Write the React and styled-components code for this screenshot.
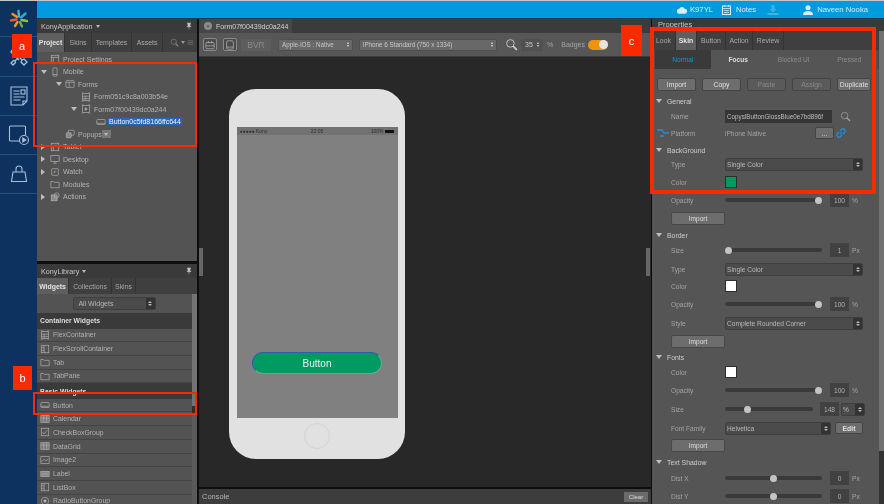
import React from "react";
import styled, { createGlobalStyle } from "styled-components";

const Global = createGlobalStyle`
  html, body { margin: 0; padding: 0; background: #222; }
  #root { width: 884px; height: 504px; overflow: hidden; }
  * { box-sizing: border-box; }
`;

const Page = styled.div`
  position: relative; width: 884px; height: 504px; overflow: hidden; display: flex;
  font-family: "Liberation Sans", Arial, sans-serif; font-size: 7px; color: #bdbdbd;
  background: #222; border-top: 1px solid #c4c7c9; filter: blur(0.3px);
`;
const Sidebar = styled.nav`
  width: 37px; flex: none; background: #0d325f; display: flex; flex-direction: column;
`;
const SideItem = styled.div`
  height: ${p => p.$h}px; flex: none; display: flex; align-items: center; justify-content: center;
  border-bottom: 1px solid #26517f; color: #a9c0d8;
`;
const Column = styled.div`flex: 1; min-width: 0; display: flex; flex-direction: column;`;
const TopBar = styled.header`
  height: 18px; flex: none; background: #009bdc; display: flex; align-items: center; justify-content: flex-end;
  color: #d4eefa; font-size: 7.7px; padding-right: 16px; border-bottom: 1px solid #063a55;
`;
const TopItem = styled.div`
  display: flex; align-items: center; gap: ${p => p.$gap ?? 3}px; margin-left: ${p => p.$ml}px; color: ${p => p.$c || "#d4eefa"};
`;
const Work = styled.div`flex: 1; min-height: 0; display: flex; background: #0e0e0e;`;

const LeftPane = styled.section`
  width: 160px; flex: none; display: flex; flex-direction: column; gap: 3px;
`;
const PanelBlock = styled.div`
  height: ${p => p.$h}px; flex: ${p => p.$h ? "none" : "1"}; min-height: 0; background: #535353; display: flex; flex-direction: column; overflow: hidden;
`;
const PanelHead = styled.div`
  height: 14px; flex: none; background: #3a3a3a; color: #c4c4c4; font-size: 7.2px; display: flex; align-items: center;
  justify-content: space-between; padding: 0 4px 0 4px;
`;
const Caret = styled.span`
  display: inline-block; width: 0; height: 0; margin-left: ${p => p.$ml ?? 3}px; vertical-align: middle;
  border-left: 2.5px solid transparent; border-right: 2.5px solid transparent; border-top: 3px solid ${p => p.$c || "#bbb"};
`;
const TabRow = styled.div`
  height: ${p => p.$h}px; flex: none; background: #3f3f3f; display: flex; align-items: stretch; position: relative;
`;
const Tab = styled.div`
  width: ${p => p.$w}px; flex: none; display: flex; align-items: center; justify-content: center; font-size: 6.9px;
  color: ${p => p.$active ? "#e2e2e2" : "#a9a9a9"}; background: ${p => p.$active ? "#5e5e5e" : "transparent"};
  border-right: 1px solid #333; font-weight: ${p => p.$active ? 700 : 400};
`;
const TabTools = styled.div`
  flex: 1; display: flex; align-items: center; justify-content: flex-end; gap: 2px; padding-right: 3px; color: #8c8c8c;
`;
const Tree = styled.div`padding-top: 1px; display: flex; flex-direction: column;`;
const TreeRow = styled.div`
  height: 12.5px; flex: none; display: flex; align-items: center; position: relative; padding-left: ${p => p.$x}px; color: #b4b4b4; gap: 3px;
`;
const TreeArrow = styled.span`
  width: 0; height: 0; flex: none; margin-right: ${p => p.$gap}px;
  ${p => p.$open
    ? "border-left:3px solid transparent;border-right:3px solid transparent;border-top:4px solid #bdbdbd;"
    : "border-top:3px solid transparent;border-bottom:3px solid transparent;border-left:4px solid #bdbdbd;"}
`;
const Selected = styled.span`background: #2d66b8; color: #eef; padding: 0 1px; margin-left: -1px;`;
const SmallDrop = styled.span`
  width: 9px; height: 8px; background: #777; display: inline-flex; align-items: center; justify-content: center; margin-left: -3px;
`;
const FilterRow = styled.div`
  height: 19px; flex: none; display: flex; justify-content: center; align-items: center; padding-right: 6px;
`;
const Select = styled.div`
  width: ${p => p.$w}px; height: ${p => p.$h || 13}px; flex: none; background: #4b4b4b; border: 1px solid #3e3e3e; border-radius: 2px;
  display: flex; align-items: center; justify-content: space-between; color: #b8b8b8; padding-left: 1px; overflow: hidden;
`;
const Stepper = styled.span`
  width: 9px; align-self: stretch; flex: none; background: #333; display: flex; flex-direction: column; align-items: center; justify-content: center; gap: 1px; color: #aaa;
  &::before, &::after { content: ""; width: 0; height: 0; border-left: 2px solid transparent; border-right: 2px solid transparent; }
  &::before { border-bottom: 2px solid #bbb; }
  &::after { border-top: 2px solid #bbb; }
`;
const Library = styled.div`flex: 1; min-height: 0; display: flex;`;
const WidgetList = styled.div`flex: 1; min-width: 0; display: flex; flex-direction: column; overflow: hidden;`;
const ListScroll = styled.div`
  width: 5px; flex: none; background: #5a5a5a; margin-top: -19px; display: flex; flex-direction: column;
  &::before { content: ""; flex: none; height: 112px; background: #737373; }
  &::after { content: ""; flex: none; height: 7px; background: #2e2e2e; }
`;
const WidgetHead = styled.div`
  height: 15.5px; flex: none; background: #3a3a3a; color: #dcdcdc; font-weight: 700; font-size: 6.8px; display: flex; align-items: center; padding-left: 3px;
`;
const WidgetRow = styled.div`
  height: 13.7px; flex: none; border-bottom: 1px solid #444; display: flex; align-items: center; gap: 3px; padding-left: 3px; color: #b2b2b2; font-size: 6.9px;
`;

const Center = styled.main`
  flex: 1; min-width: 0; margin: 0 1px 0 2px; display: flex; flex-direction: column; background: #282828;
`;
const FileTabs = styled.div`height: 14px; flex: none; background: #3b3b3b; display: flex;`;
const FileTab = styled.div`
  width: 93px; background: #474747; display: flex; align-items: center; gap: 4px; padding-left: 5px; color: #d2d2d2; font-size: 7px;
`;
const CloseDot = styled.span`
  width: 8px; height: 8px; border-radius: 50%; background: #8c8c8c; color: #444; font-size: 6px; line-height: 8px; text-align: center;
`;
const Toolbar = styled.div`
  height: 24px; flex: none; background: #575757; display: flex; align-items: center; padding-left: 4px; border-bottom: 1px solid #3c3c3c;
`;
const ToolIcon = styled.div`
  width: 14px; height: 13px; margin-right: ${p => p.$mr}px; border: 1px solid #8a8a8a; border-radius: 2px; background: #4a4a4a; display: flex; align-items: center; justify-content: center; color: #c0c0c0;
`;
const BvrButton = styled.div`
  width: 30px; height: 12px; margin-right: 7px; background: #5e5e5e; border-radius: 1px; color: #8b8b8b; font-size: 8.5px; display: flex; align-items: center; justify-content: center;
`;
const ToolSelect = styled(Select)`
  margin-right: ${p => p.$mr}px; background: #686868; border-color: #4f4f4f; color: #c8c8c8; height: 12px; padding: 0 3px; font-size: 6.3px;
`;
const UpDown = styled.span`
  display: flex; flex-direction: column; gap: 1px; flex: none;
  &::before, &::after { content: ""; width: 0; height: 0; border-left: 1.5px solid transparent; border-right: 1.5px solid transparent; }
  &::before { border-bottom: 2px solid #ddd; }
  &::after { border-top: 2px solid #ddd; }
`;
const ZoomBox = styled(ToolSelect)`background: #505050; font-size: 7px;`;
const ToolText = styled.span`color: ${p => p.$c || "#a5a5a5"}; font-size: 7px; margin-right: ${p => p.$mr || 0}px;`;
const Toggle = styled.span`
  width: 20px; height: 10px; border-radius: 5px; background: #f0920a; display: flex; justify-content: flex-end; align-items: center;
  &::after { content: ""; width: 9px; height: 9px; border-radius: 50%; background: #e4e4e4; }
`;
const Canvas = styled.div`
  flex: 1; min-height: 0; padding: 32px 0 0 30px; position: relative;
`;
const Phone = styled.div`
  width: 176px; height: 370px; background: #e1e1e1; border-radius: 27px; padding-top: 38px; display: flex; flex-direction: column; align-items: center;
`;
const Screen = styled.div`
  width: 161px; height: 291px; flex: none; background: #808080; display: flex; flex-direction: column; align-items: center;
`;
const StatusBar = styled.div`
  width: 100%; height: 8px; flex: none; background: #727272; color: #2f2f2f; font-size: 5px; display: flex; justify-content: space-between; align-items: center; padding: 0 3px;
`;
const StatusSide = styled.span`width: 50px; display: flex; gap: 2px; align-items: center; justify-content: ${p => p.$end ? "flex-end" : "flex-start"};`;
const Battery = styled.span`width: 9px; height: 3px; background: #111; display: inline-block;`;
const ScreenButton = styled.div`
  width: 130px; height: 22px; flex: none; margin-top: 217px; background: #009a62; border: 1px solid #3e6db0; border-color: #2d5fa8 #68a890 #68a890 #2d5fa8; border-radius: 11px / 11px;
  color: #e6f5ee; font-size: 10px; display: flex; align-items: center; justify-content: center;
`;
const HomeKey = styled.div`
  width: 26px; height: 26px; flex: none; margin-top: 5px; border-radius: 50%; border: 1px solid #d4d4d4;
`;
const Console = styled.footer`
  height: 17px; flex: none; background: #3d3d3d; border-top: 2px solid #0e0e0e; display: flex; align-items: center; justify-content: space-between;
  padding: 0 3px 0 3px; color: #b5b5b5; font-size: 7.5px;
`;
const ClearBtn = styled.span`
  width: 24px; height: 10px; background: #6a6a6a; color: #ddd; font-size: 6px; display: flex; align-items: center; justify-content: center;
`;

const RightPane = styled.aside`
  width: 232px; flex: none; background: #555; display: flex; flex-direction: column; position: relative; overflow: hidden; font-size: 6.6px;
`;
const PropHead = styled.div`height: 12px; flex: none; background: #3a3a3a; color: #c4c4c4; font-size: 7.5px; padding-left: 6px; line-height: 12px;`;
const SubTabs = styled.div`height: 19px; flex: none; background: #4a4a4a; display: flex; padding-left: 3px;`;
const SubTab = styled.div`
  width: 55.5px; display: flex; align-items: center; justify-content: center; font-size: 6.6px;
  color: ${p => p.$c}; background: ${p => p.$bg || "transparent"}; font-weight: ${p => p.$bold ? 700 : 400};
`;
const PropBody = styled.div`flex: 1; min-height: 0; display: flex;`;
const PropColumn = styled.div`width: 227px; flex: none; display: flex; flex-direction: column;`;
const PropList = styled.div`flex: 1; min-height: 0; display: flex; flex-direction: column; padding-top: 9px;`;
const RightScroll = styled.div`flex: 1; background: #717171; display: flex; flex-direction: column; justify-content: flex-end;
  &::after { content: ""; height: 53px; background: #333; }
`;
const ActionRow = styled.div`height: 13px; flex: none; display: flex; gap: 6px; padding-left: 5px; margin-bottom: 3px;`;
const ActionBtn = styled.div`
  width: ${p => p.$w || 39}px; height: 13px; flex: none; border: 1px solid #444; border-radius: 2px; background: ${p => p.$off ? "#5a5a5a" : "#6d6d6d"};
  color: ${p => p.$off ? "#8b8b8b" : "#e0e0e0"}; font-size: 6.8px; display: flex; align-items: center; justify-content: center; white-space: nowrap;
`;
const Row = styled.div`
  height: ${p => p.$h}px; flex: none; display: grid; grid-template-columns: 54px 1fr; align-items: center; padding-left: 19px; color: #a3a3a3;
`;
const SectionRow = styled.div`
  height: ${p => p.$h}px; flex: none; display: flex; align-items: center; gap: 5px; padding-left: 4px; color: #cdcdcd; font-size: 6.9px;
`;
const Controls = styled.div`display: flex; align-items: center; gap: ${p => p.$gap ?? 8}px;`;
const NameInput = styled.div`
  width: 107px; height: 13px; background: #363636; color: #bdbdbd; padding-left: 2px; line-height: 13px; font-size: 6.3px; white-space: nowrap;
`;
const Slider = styled.div`
  width: ${p => p.$w}px; height: 4px; border-radius: 2px; background: #3a3a3a; position: relative; flex: none;
`;
const Thumb = styled.span`
  position: absolute; top: -1.5px; width: 7px; height: 7px; border-radius: 50%; background: #c4c4c4;
`;
const NumBox = styled.div`
  width: 19px; height: 14px; background: #414141; color: #b0b0b0; display: flex; align-items: center; justify-content: center; flex: none;
`;
const Unit = styled.span`color: #a5a5a5; margin-left: -5px;`;
const Swatch = styled.div`
  width: 12px; height: 12px; background: ${p => p.$c}; border: 1px solid #2e2e2e;
`;
const ImportBtn = styled.div`
  width: 54px; height: 13px; margin-left: 19px; background: #6d6d6d; border: 1px solid #484848; border-radius: 2px; color: #dcdcdc; display: flex; align-items: center; justify-content: center;
`;
const ImportRow = styled.div`height: ${p => p.$h}px; flex: none; display: flex; align-items: center;`;
const EditBtn = styled(ActionBtn)`width: 28px; height: 12px; font-weight: 700;`;
const DotsBtn = styled(ActionBtn)`width: 19px; height: 12px; margin-left: 49px;`;
const PlatformMark = styled.span`position: absolute; left: ${p => p.$x}px; color: #1f8fe0; display: flex;`;

const Marker = styled.div`
  position: absolute; left: ${p => p.$x}px; top: ${p => p.$y}px; width: ${p => p.$w}px; height: ${p => p.$h}px;
  background: #fa2a00; color: #fff; font-size: 11px; display: flex; align-items: center; justify-content: center;
`;
const Outline = styled.div`
  position: absolute; left: ${p => p.$x}px; top: ${p => p.$y}px; width: ${p => p.$w}px; height: ${p => p.$h}px;
  border: ${p => p.$t}px solid #fa2a00; pointer-events: none;
`;
const Grip = styled.div`
  position: absolute; left: ${p => p.$x}px; top: 247px; width: 4px; height: 28px; background: #666;
`;

const I = ({ n, s = 10 }) => {
  const shapes = {
    settings: <><rect x="1.5" y="1.5" width="9" height="9" /><path d="M1.5 4h9M4 4v6.5" /></>,
    phone: <><rect x="3.5" y="1" width="5" height="10" rx="1" /><path d="M3.5 9h5" /></>,
    forms: <><rect x="1" y="2" width="10" height="8" rx="1" /><path d="M1 4h10M5 4v6" /></>,
    grid: <><rect x="2" y="2" width="8" height="8" /><path d="M2 5h8M2 8h8M5 5v5" /><path d="M1 1h2M9 1h2M1 11h2M9 11h2" /></>,
    play: <><rect x="2" y="2" width="8" height="8" /><path d="M5 4.500l2.500 1.500L5 7.500z" fill="currentColor" /><path d="M1 1h2M9 1h2M1 11h2M9 11h2" /></>,
    btn: <><rect x="1" y="3" width="10" height="6" rx="1" /><path d="M1 7.500h10" /></>,
    popup: <><rect x="4" y="1.500" width="7" height="6" rx="1" /><rect x="1.500" y="4.500" width="6" height="6" rx="1" fill="#8a8a8a" /></>,
    desktop: <><rect x="1" y="2" width="10" height="7" /><path d="M4 11h4M6 9v2" /></>,
    watch: <><rect x="2" y="2" width="8" height="8" rx="1" /><path d="M6 4v2.500H4" /></>,
    folder: <path d="M1 3h3l1 1h6v6.500H1z" />,
    action: <><rect x="1.500" y="3.500" width="7" height="7" fill="#8a8a8a" /><circle cx="8" cy="4" r="3" /></>,
    check: <><rect x="1.500" y="1.500" width="9" height="9" /><path d="M3 6l2 2.500 4-5" /></>,
    table: <><rect x="1" y="2" width="10" height="8" fill="#777" /><path d="M1 5h10M4.500 2v8M8 2v8" /></>,
    image: <><rect x="1" y="2" width="10" height="8" /><path d="M2 8l3-3 2 2 3-2" /></>,
    label: <><rect x="1" y="3" width="10" height="6" fill="#888" /><path d="M3 6h6" /></>,
    list: <><rect x="1.500" y="1.500" width="9" height="9" /><path d="M5 1.500v9M1.500 4.500h3.500M1.500 7.500h3.500" /></>,
    radio: <><circle cx="6" cy="6" r="4.500" /><circle cx="6" cy="6" r="1.500" fill="currentColor" /></>,
    search: <><circle cx="5" cy="5" r="3.500" /><path d="M7.500 7.500L11 11" strokeWidth="1.500" /></>,
    menu: <path d="M1 3h10M1 6h10M1 9h10" />,
    link: <path d="M5 7l2-2M4 5L2.500 6.500a2 2 0 003 3L7 8M8 7l1.500-1.500a2 2 0 00-3-3L5 4" strokeWidth="1.200" />,
    pin: <path d="M3 1.500h6M4 1.500l.5 4L3 7h6L7.500 5.500 8 1.500M6 7v4" fill="currentColor" />,
    layoutA: <><rect x="1" y="3" width="10" height="7.500" rx="1" /><path d="M1 7h10M4 1v3M8 1v3" /></>,
    layoutB: <><rect x="2" y="1" width="8" height="10" rx="1" /><path d="M2 8.500h8" /></>,
  };
  return (
    <svg width={s} height={s} viewBox="0 0 12 12" fill="none" stroke="currentColor" strokeWidth="0.8" style={{ flex: "none", display: "block" }}>
      {shapes[n]}
    </svg>
  );
};

const Logo = () => (
  <svg width="20" height="20" viewBox="0 0 20 20" fill="none" strokeWidth="2.400" strokeLinecap="round">
    <path d="M10 7.500L9.500 2" stroke="#3cb8cc" />
    <path d="M12 8.500l4.500-4" stroke="#2fa9c4" />
    <path d="M12.500 11l5.500 1" stroke="#8cc63f" />
    <path d="M11 13l2 4.500" stroke="#6cb33f" />
    <path d="M8.500 13l-2.500 4" stroke="#f7941d" />
    <path d="M7.500 10.500l-5.500 1" stroke="#f15a29" />
    <path d="M8 8L3.500 5" stroke="#f7941d" />
  </svg>
);
const Tools = () => (
  <svg width="20" height="20" viewBox="0 0 20 20" fill="none" stroke="currentColor" strokeWidth="1.300">
    <path d="M3 3l10 10 2-1 3 3-3 3-3-3 1-2M3 3l-1 2 8 8" />
    <path d="M17 3l-11 11-1.500-.5L2 16l2 2 2.500-2.500-.5-1.500" />
  </svg>
);
const FormDoc = () => (
  <svg width="20" height="22" viewBox="0 0 20 22" fill="none" stroke="currentColor" strokeWidth="1.100">
    <path d="M2 2h16v14l-4 4H2z" /><path d="M14 20v-4h4M4.500 6h6M4.500 9h6M4.500 12h11M4.500 15h7" /><rect x="12" y="5" width="4" height="4" />
  </svg>
);
const VideoDoc = () => (
  <svg width="22" height="22" viewBox="0 0 22 22" fill="none" stroke="currentColor" strokeWidth="1.100">
    <path d="M12 17H2.500a1 1 0 01-1-1V3a1 1 0 011-1h14a1 1 0 011 1v8" /><circle cx="16" cy="16" r="4.500" /><path d="M14.800 14l3 2-3 2z" fill="currentColor" />
  </svg>
);
const Bag = () => (
  <svg width="18" height="18" viewBox="0 0 18 18" fill="none" stroke="currentColor" strokeWidth="1.100">
    <path d="M3 7h12l1.500 9.500h-15z" /><path d="M6 7V4a3 3 0 016 0v3" />
  </svg>
);
const Cloud = () => (
  <svg width="10" height="8" viewBox="0 0 12 9" fill="currentColor"><path d="M3 9a3 3 0 01-.3-6A3.500 3.500 0 019.200 3 3 3 0 019 9z" /></svg>
);
const Notes = () => (
  <svg width="9" height="10" viewBox="0 0 9 10" fill="none" stroke="currentColor"><rect x=".5" y="1" width="8" height="8.500" /><path d="M0 3.500h9M2 5.500h5M2 7.500h5M2.500 0v2M6.500 0v2" strokeWidth=".8" /></svg>
);
const Download = () => (
  <svg width="12" height="10" viewBox="0 0 11 10" fill="currentColor"><path d="M4 0h3v4h2L5.500 7.500 2 4h2zM0 8h11v2H0z" /></svg>
);
const User = () => (
  <svg width="10" height="10" viewBox="0 0 10 10" fill="currentColor"><circle cx="5" cy="2.800" r="2.500" /><path d="M0 10c0-3 2-4 5-4s5 1 5 4z" /></svg>
);

const widgetsA = [["grid", "FlexContainer"], ["list", "FlexScrollContainer"], ["folder", "Tab"], ["folder", "TabPane"]];
const widgetsB = [["btn", "Button"], ["table", "Calendar"], ["check", "CheckBoxGroup"], ["table", "DataGrid"], ["image", "Image2"], ["label", "Label"], ["list", "ListBox"], ["radio", "RadioButtonGroup"]];

const Section = ({ h, children }) => (
  <SectionRow $h={h}><TreeArrow $open $gap={0} />{children}</SectionRow>
);
const SliderRow = ({ h, label, at, value, unit }) => (
  <Row $h={h}>
    <span>{label}</span>
    <Controls>
      <Slider $w={97}><Thumb style={{ left: `${at * 90}px` }} /></Slider>
      <NumBox>{value}</NumBox>
      <Unit>{unit}</Unit>
    </Controls>
  </Row>
);
const SelectRow = ({ h, label, value }) => (
  <Row $h={h}>
    <span>{label}</span>
    <Select $w={138}>{value}<Stepper /></Select>
  </Row>
);
const ColorRow = ({ h, color }) => (
  <Row $h={h}><span>Color</span><Swatch $c={color} /></Row>
);
const Import = ({ h }) => (
  <ImportRow $h={h}><ImportBtn>Import</ImportBtn></ImportRow>
);

export default function App() {
  return (
    <Page>
      <Global />
      <Sidebar>
        <SideItem $h={36}><Logo /></SideItem>
        <SideItem $h={40}><Tools /></SideItem>
        <SideItem $h={39}><FormDoc /></SideItem>
        <SideItem $h={39}><VideoDoc /></SideItem>
        <SideItem $h={39}><Bag /></SideItem>
      </Sidebar>
      <Column>
        <TopBar>
          <TopItem><Cloud />K97YL</TopItem>
          <TopItem $ml={9} $gap={5}><Notes />Notes</TopItem>
          <TopItem $ml={11} $c="#3fb1e3"><Download /></TopItem>
          <TopItem $ml={24} $gap={4}><User />Naveen Nooka</TopItem>
        </TopBar>
        <Work>
          <LeftPane>
            <PanelBlock $h={242}>
              <PanelHead><span>KonyApplication<Caret /></span><I n="pin" s={8} /></PanelHead>
              <TabRow $h={19}>
                <Tab $active $w={28}>Project</Tab>
                <Tab $w={27}>Skins</Tab>
                <Tab $w={40}>Templates</Tab>
                <Tab $w={31}>Assets</Tab>
                <TabTools><I n="search" s={9} /><Caret $c="#999" $ml={0} /><I n="menu" s={7} /></TabTools>
              </TabRow>
              <Tree>
                <TreeRow $x={13}><I n="settings" />Project Settings</TreeRow>
                <TreeRow $x={4}><TreeArrow $open $gap={0} /><I n="phone" />Mobile</TreeRow>
                <TreeRow $x={19}><TreeArrow $open $gap={0} /><I n="forms" />Forms</TreeRow>
                <TreeRow $x={44}><I n="grid" />Form051c9c8a003b54e</TreeRow>
                <TreeRow $x={34}><TreeArrow $open $gap={1} /><I n="play" />Form07f00439dc0a244</TreeRow>
                <TreeRow $x={59}><I n="btn" /><Selected>Button0c5fd8166ffc644</Selected></TreeRow>
                <TreeRow $x={28}><I n="popup" />Popups<SmallDrop><Caret $ml={0} /></SmallDrop></TreeRow>
                <TreeRow $x={4}><TreeArrow $gap={2} /><I n="settings" />Tablet</TreeRow>
                <TreeRow $x={4}><TreeArrow $gap={2} /><I n="desktop" />Desktop</TreeRow>
                <TreeRow $x={4}><TreeArrow $gap={2} /><I n="watch" />Watch</TreeRow>
                <TreeRow $x={13}><I n="folder" />Modules</TreeRow>
                <TreeRow $x={4}><TreeArrow $gap={2} /><I n="action" />Actions</TreeRow>
              </Tree>
            </PanelBlock>
            <PanelBlock>
              <PanelHead><span>KonyLibrary<Caret /></span><I n="pin" s={8} /></PanelHead>
              <TabRow $h={16}>
                <Tab $active $w={32}>Widgets</Tab>
                <Tab $w={43}>Collections</Tab>
                <Tab $w={24}>Skins</Tab>
              </TabRow>
              <FilterRow><Select $w={83}>&nbsp;&nbsp;All Widgets<Stepper /></Select></FilterRow>
              <Library>
                <WidgetList>
                  <WidgetHead>Container Widgets</WidgetHead>
                  {widgetsA.map(([i, t]) => <WidgetRow key={t}><I n={i} />{t}</WidgetRow>)}
                  <WidgetHead>Basic Widgets</WidgetHead>
                  {widgetsB.map(([i, t]) => <WidgetRow key={t}><I n={i} />{t}</WidgetRow>)}
                </WidgetList>
                <ListScroll />
              </Library>
            </PanelBlock>
          </LeftPane>
          <Center>
            <FileTabs><FileTab><CloseDot>×</CloseDot>Form07f00439dc0a244</FileTab></FileTabs>
            <Toolbar>
              <ToolIcon $mr={6}><I n="layoutA" /></ToolIcon>
              <ToolIcon $mr={4}><I n="layoutB" /></ToolIcon>
              <BvrButton>BVR</BvrButton>
              <ToolSelect $w={75} $mr={6}>Apple-iOS : Native<UpDown /></ToolSelect>
              <ToolSelect $w={138} $mr={8}>iPhone 6 Standard (750 x 1334)<UpDown /></ToolSelect>
              <ToolText $c="#cfcfcf" $mr={3}><I n="search" s={13} /></ToolText>
              <ZoomBox $w={22} $mr={4}>35<UpDown /></ZoomBox>
              <ToolText $mr={8}>%</ToolText>
              <ToolText $mr={3}>Badges</ToolText>
              <Toggle />
            </Toolbar>
            <Canvas>
              <Phone>
                <Screen>
                  <StatusBar>
                    <StatusSide>●●●●● Kony</StatusSide>
                    <span>22:05</span>
                    <StatusSide $end>100% <Battery /></StatusSide>
                  </StatusBar>
                  <ScreenButton>Button</ScreenButton>
                </Screen>
                <HomeKey />
              </Phone>
            </Canvas>
            <Console>Console<ClearBtn>Clear</ClearBtn></Console>
          </Center>
          <RightPane>
            <PropHead>Properties</PropHead>
            <PropBody>
              <PropColumn>
                <TabRow $h={19}>
                  <Tab $w={24}>Look</Tab>
                  <Tab $active $w={21}>Skin</Tab>
                  <Tab $w={29}>Button</Tab>
                  <Tab $w={27}>Action</Tab>
                  <Tab $w={31}>Review</Tab>
                </TabRow>
                <SubTabs>
                  <SubTab $c="#0d9ad6" $bg="#3a3a3a">Normal</SubTab>
                  <SubTab $c="#dedede" $bg="#555" $bold>Focus</SubTab>
                  <SubTab $c="#8c8c8c" $bg="#555">Blocked UI</SubTab>
                  <SubTab $c="#8c8c8c" $bg="#555">Pressed</SubTab>
                </SubTabs>
                <PropList>
                  <ActionRow>
                    <ActionBtn>Import</ActionBtn>
                    <ActionBtn>Copy</ActionBtn>
                    <ActionBtn $off>Paste</ActionBtn>
                    <ActionBtn $off>Assign</ActionBtn>
                    <ActionBtn $w={34}>Duplicate</ActionBtn>
                  </ActionRow>
                  <Section h={14}>General</Section>
                  <Row $h={16}>
                    <span>Name</span>
                    <Controls><NameInput>CopyslButtonGlossBlue0e7bd896f</NameInput><I n="search" s={11} /></Controls>
                  </Row>
                  <Row $h={18}>
                    <PlatformMark $x={5}><svg width="12" height="8" viewBox="0 0 12 8" fill="none" stroke="currentColor" strokeWidth="1.300"><path d="M0 1h5l2 3h5M3 7h4" /></svg></PlatformMark>
                    <span>Platform</span>
                    <Controls $gap={0}>iPhone Native<DotsBtn>...</DotsBtn><PlatformMark $x={183}><I n="link" s={12} /></PlatformMark></Controls>
                  </Row>
                  <Section h={16}>BackGround</Section>
                  <SelectRow h={13} label="Type" value="Single Color" />
                  <ColorRow h={22} color="#009a62" />
                  <SliderRow h={14} label="Opacity" at={1} value="100" unit="%" />
                  <Import h={22} />
                  <Section h={12}>Border</Section>
                  <SliderRow h={18} label="Size" at={0} value="1" unit="Px" />
                  <SelectRow h={20} label="Type" value="Single Color" />
                  <ColorRow h={14} color="#fff" />
                  <SliderRow h={22} label="Opacity" at={1} value="100" unit="%" />
                  <SelectRow h={16} label="Style" value="Complete Rounded Corner" />
                  <Import h={20} />
                  <Section h={12}>Fonts</Section>
                  <ColorRow h={18} color="#fff" />
                  <SliderRow h={18} label="Opacity" at={1} value="100" unit="%" />
                  <Row $h={20}>
                    <span>Size</span>
                    <Controls $gap={7}>
                      <Slider $w={88}><Thumb style={{ left: "19px" }} /></Slider>
                      <NumBox>148</NumBox>
                      <Select $w={24} style={{ marginLeft: "-5px" }}>%<Stepper /></Select>
                    </Controls>
                  </Row>
                  <Row $h={18}>
                    <span>Font Family</span>
                    <Controls $gap={4}><Select $w={106}>Helvetica<Stepper /></Select><EditBtn>Edit</EditBtn></Controls>
                  </Row>
                  <Import h={16} />
                  <Section h={18}>Text Shadow</Section>
                  <SliderRow h={12} label="Dist X" at={0.5} value="0" unit="Px" />
                  <SliderRow h={26} label="Dist Y" at={0.5} value="0" unit="Px" />
                </PropList>
              </PropColumn>
              <RightScroll />
            </PropBody>
          </RightPane>
        </Work>
      </Column>
      <Grip $x={199} />
      <Grip $x={646} />
      <Marker $x={12} $y={33} $w={20} $h={24}>a</Marker>
      <Marker $x={13} $y={365} $w={19} $h={24}>b</Marker>
      <Marker $x={621} $y={24} $w={21} $h={31}>c</Marker>
      <Outline $x={33} $y={61} $w={164} $h={85} $t={2.5} />
      <Outline $x={33} $y={391} $w={164} $h={23} $t={2.5} />
      <Outline $x={650} $y={26} $w={226} $h={167} $t={4} />
    </Page>
  );
}
